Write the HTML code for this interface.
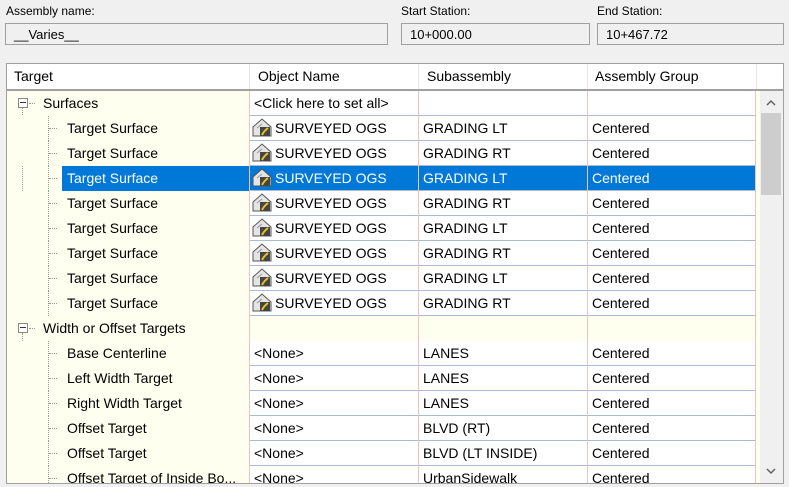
<!DOCTYPE html><html><head><style>
html{overflow:hidden;height:487px}
body{margin:0;width:789px;height:487px;background:#f0f0f0;font-family:"Liberation Sans",sans-serif;font-size:14px;color:#000;position:relative;overflow:hidden}
.a{position:absolute;white-space:nowrap}
.box{position:absolute;border:1px solid #a0a0a0;background:#f0f0f0;height:22px;line-height:22px;padding-left:8px;box-sizing:border-box;font-size:13px}
.lbl{font-size:12px;color:#000}
.row{position:absolute;left:0;width:750px;height:25px}
.c{position:absolute;top:0;height:25px;line-height:24px;box-sizing:border-box;padding-left:4px;white-space:nowrap;overflow:hidden}
.t{left:0;width:242px;background:#fffff0}
.o{left:242px;width:169px;background:#fff;border-bottom:1px solid #a9bcd2;border-left:1px solid #f5c0c0}
.s{left:411px;width:169px;background:#fff;border-bottom:1px solid #a9bcd2;border-left:1px solid #f5c0c0}
.g{left:580px;width:169px;background:#fff;border-bottom:1px solid #a9bcd2;border-left:1px solid #f5c0c0;border-right:1px solid #f5c0c0}
.y{background:#fffff0 !important;border-bottom:none}
.sel .o,.sel .s,.sel .g{background:#0078d7;color:#fff}
.ic{display:inline-block;vertical-align:middle;margin:-3px 3px 0 -2px}
.dot{position:absolute;border-top:1px dotted #999;width:8px}
#clip{position:absolute;left:7px;top:91px;width:750px;height:392px;overflow:hidden;background:#fffff0}
.arr{position:absolute;left:761px;width:20px;height:16px;overflow:hidden}
</style></head><body>
<div class="a lbl" style="left:6px;top:4px">Assembly name:</div>
<div class="box" style="left:5px;top:23px;width:383px">__Varies__</div>
<div class="a lbl" style="left:401px;top:4px">Start Station:</div>
<div class="box" style="left:401px;top:23px;width:189px">10+000.00</div>
<div class="a lbl" style="left:597px;top:4px">End Station:</div>
<div class="box" style="left:597px;top:23px;width:187px">10+467.72</div>

<div class="a" style="left:6px;top:63px;width:778px;height:421px;border:1px solid #a0a0a0;background:#fff;box-sizing:border-box"></div>
<div class="a" style="left:7px;top:64px;width:776px;height:25px;background:#fff;border-bottom:2px solid #a0a0a0"></div>
<div class="a" style="left:14px;top:68px">Target</div>
<div class="a" style="left:249px;top:64px;height:25px;border-left:1px solid #e5e5e5"></div>
<div class="a" style="left:258px;top:68px">Object Name</div>
<div class="a" style="left:418px;top:64px;height:25px;border-left:1px solid #e5e5e5"></div>
<div class="a" style="left:427px;top:68px">Subassembly</div>
<div class="a" style="left:587px;top:64px;height:25px;border-left:1px solid #e5e5e5"></div>
<div class="a" style="left:595px;top:68px">Assembly Group</div>
<div class="a" style="left:756px;top:64px;height:25px;border-left:1px solid #e5e5e5"></div>

<div class="a" style="left:756px;top:91px;width:4px;height:392px;background:#fffff0"></div>
<div class="a" style="left:760px;top:91px;width:23px;height:392px;background:#f0f0f0"></div>
<div class="a" style="left:761px;top:113px;width:20px;height:82px;background:#cdcdcd"></div>
<svg class="arr" style="top:95px" viewBox="0 0 20 16"><path d="M6 10 L10 6 L14 10" stroke="#606060" stroke-width="1.5" fill="none"/></svg>
<svg class="arr" style="top:463px" viewBox="0 0 20 16"><path d="M6 6 L10 10 L14 6" stroke="#606060" stroke-width="1.5" fill="none"/></svg>

<div id="clip"></div>
<script>
const ic='<svg class="ic" width="20" height="19" viewBox="0 0 20 19"><path d="M1 9 L10 1 L19 9 L19 18 L1 18Z" fill="#e4e4e4" stroke="#555"/><path d="M5 10 L10 6" stroke="#999"/><rect x="8" y="9" width="10" height="9" fill="#444"/><path d="M10 17 Q12 13 16 10" stroke="#e8c020" stroke-width="2" fill="none"/></svg>';
const R=[["Surfaces",0,"&lt;Click here to set all&gt;","","",0]];
for(let i=0;i<8;i++)R.push(["Target Surface",1,ic+"SURVEYED OGS",i%2?"GRADING RT":"GRADING LT","Centered",i==2]);
R.push(["Width or Offset Targets",0,null]);
[["Base Centerline","LANES"],["Left Width Target","LANES"],["Right Width Target","LANES"],["Offset Target","BLVD (RT)"],["Offset Target","BLVD (LT INSIDE)"],["Offset Target of Inside Bo...","UrbanSidewalk"]].forEach(x=>R.push([x[0],1,"&lt;None&gt;",x[1],"Centered",0]));
let h='';
R.forEach((r,i)=>{const top=i*25;
 h+=`<div class="row${r[5]?' sel':''}" style="top:${top}px">`;
 if(r[1]){h+=r[5]?`<div class="c t" style="left:55px;width:187px;padding-left:5px;background:#0078d7;color:#fff">${r[0]}</div>`:`<div class="c t" style="padding-left:60px">${r[0]}</div>`;}
 else h+=`<div class="c t" style="padding-left:36px">${r[0]}</div>`;
 if(r[2]===null){h+=`<div class="c o y"></div><div class="c s y"></div><div class="c g y"></div>`}
 else h+=`<div class="c o">${r[2]}</div><div class="c s">${r[3]}</div><div class="c g">${r[4]}</div>`;
 h+='</div>';
 if(r[1]){h+=`<div class="dot" style="left:42px;top:${top+12}px"></div>`;h+=`<div class="a" style="left:41px;top:${top}px;height:25px;border-left:1px dotted #999"></div>`}
 else{h+=`<div class="a" style="left:11px;top:${top+7}px;width:10px;height:10px;border:1px solid #888;background:#fff;box-sizing:border-box"></div><div class="a" style="left:13px;top:${top+11}px;width:6px;border-top:1px solid #333"></div><div class="dot" style="left:22px;top:${top+12}px;width:6px"></div><div class="a" style="left:15px;top:${top+17}px;height:${i==0?233:160}px;border-left:1px dotted #999"></div>`}
});
document.getElementById('clip').innerHTML=h;
</script>
</body></html>
